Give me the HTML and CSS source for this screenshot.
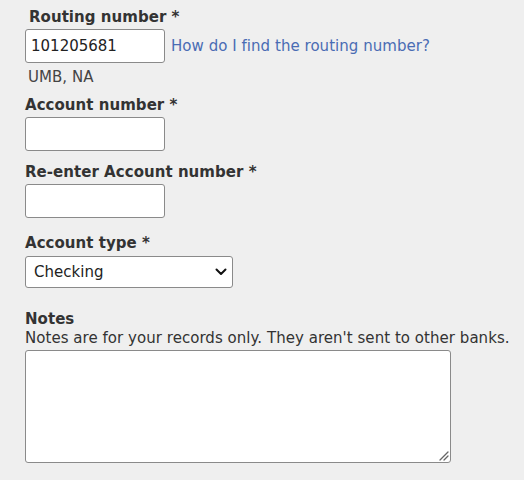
FILE: index.html
```html
<!DOCTYPE html>
<html lang="en">
<head>
<meta charset="utf-8">
<title>Bank account</title>
<link rel="stylesheet" href="styles.css">
</head>
<body>
<form class="form">
  <div class="field field-routing">
    <label class="label label-indent" for="routing">Routing number *</label>
    <div class="row">
      <input class="input" id="routing" type="text" value="101205681">
      <a class="link" href="#">How do I find the routing number?</a>
    </div>
    <div class="hint">UMB, NA</div>
  </div>
  <div class="field field-account">
    <label class="label" for="acct">Account number *</label>
    <input class="input" id="acct" type="text">
  </div>
  <div class="field field-reenter">
    <label class="label" for="acct2">Re-enter Account number *</label>
    <input class="input" id="acct2" type="text">
  </div>
  <div class="field field-type">
    <label class="label" for="type">Account type *</label>
    <div class="select">
      <span class="select-text">Checking</span>
      <svg class="chev" width="12" height="8" viewBox="0 0 12 8"><path d="M1.5 1.5 L6 6 L10.5 1.5" fill="none" stroke="#111" stroke-width="2" stroke-linecap="round" stroke-linejoin="round"/></svg>
    </div>
  </div>
  <div class="field field-notes">
    <label class="label" for="notes">Notes</label>
    <div class="desc">Notes are for your records only. They aren't sent to other banks.</div>
    <div class="textarea">
      <svg class="grip" width="11" height="11" viewBox="0 0 11 11"><path d="M10 2 L2 10 M10 6 L6 10" stroke="#666" stroke-width="1.3" stroke-linecap="round"/></svg>
    </div>
  </div>
</form>
</body>
</html>
```
FILE: styles.css
```css
html, body {
  margin: 0;
  padding: 0;
  background: #efefef;
}
body {
  font-family: "DejaVu Sans", Verdana, sans-serif;
  font-size: 15px;
  color: #333;
  line-height: 18px;
  letter-spacing: 0.04px;
}
.form {
  padding: 8px 0 0 25px;
  display: flex;
  flex-direction: column;
}
.label {
  display: block;
  font-weight: bold;
  color: #333;
}
.label-indent {
  padding-left: 4px;
}
.row {
  display: flex;
  align-items: center;
  gap: 6px;
  margin-top: 3px;
}
.input {
  box-sizing: border-box;
  display: block;
  width: 140px;
  height: 34px;
  margin: 0;
  border: 1px solid #8a8a8a;
  border-radius: 3px;
  background: #fff;
  font: inherit;
  color: #222;
  padding: 0 5px;
}
.link {
  color: #4a6cb4;
  text-decoration: none;
}
.hint {
  margin-top: 5px;
  padding-left: 3px;
  color: #444;
}
.field-account {
  margin-top: 10px;
}
.field-account .input,
.field-reenter .input {
  margin-top: 3px;
}
.field-reenter {
  margin-top: 12px;
}
.field-type {
  margin-top: 16px;
}
.select {
  box-sizing: border-box;
  margin-top: 4px;
  width: 208px;
  height: 32px;
  border: 1px solid #8a8a8a;
  border-radius: 3px;
  background: #fff;
  display: flex;
  align-items: center;
  justify-content: space-between;
  padding: 0 5px 0 8px;
  color: #222;
}
.field-notes {
  margin-top: 22px;
}
.desc {
  margin-top: 1px;
  color: #333;
}
.textarea {
  box-sizing: border-box;
  position: relative;
  margin-top: 3px;
  width: 426px;
  height: 113px;
  border: 1px solid #8a8a8a;
  border-radius: 3px;
  background: #fff;
}
.grip {
  position: absolute;
  right: 1px;
  bottom: 1px;
}
```
